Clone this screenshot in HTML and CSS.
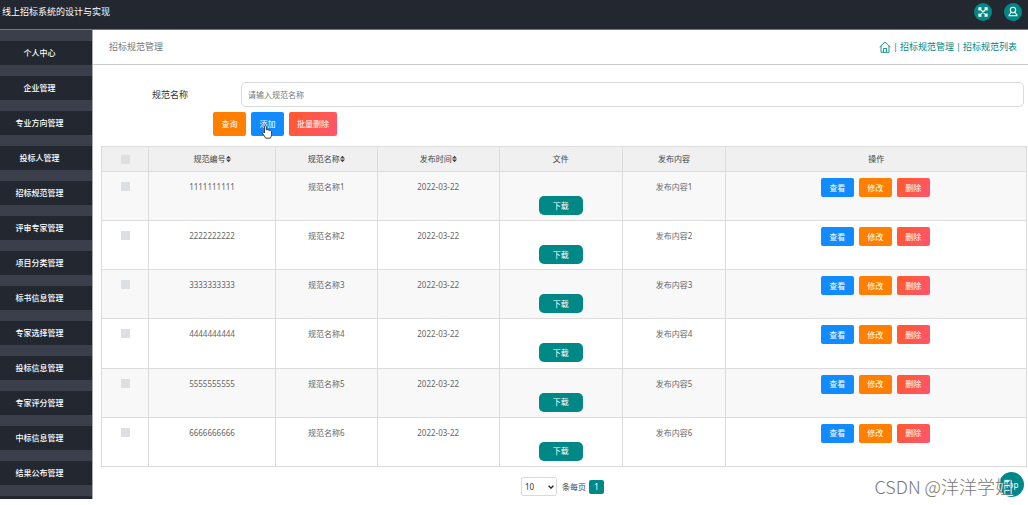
FILE: index.html
```html
<!DOCTYPE html>
<html lang="zh-CN">
<head>
<meta charset="utf-8">
<title>线上招标系统的设计与实现</title>
<link rel="stylesheet" href="styles.css">
</head>
<body>
<div class="app">
<header class="topbar">
  <h1 class="brand">线上招标系统的设计与实现</h1>
  <div class="top-actions">
    <button class="round" type="button" aria-label="全屏"><svg viewBox="0 0 18 18" fill="none" stroke="currentColor" stroke-width="1.300"><path d="M5.500 5.500l7 7M12.500 5.500l-7 7M5 7.500V5h2.500M10.500 5H13v2.500M13 10.500V13h-2.500M7.500 13H5v-2.500"/></svg></button>
    <button class="round" type="button" aria-label="用户"><svg viewBox="0 0 18 18" fill="none" stroke="currentColor" stroke-width="1.100"><circle cx="9" cy="7" r="2.700"/><path d="M7.500 9.300C7 10.300 5 10.300 5 12.800h8c0-2.500-2-2.500-2.500-3.500"/></svg></button>
  </div>
</header>
<div class="body">
<nav class="sidebar">
  <a href="#">个人中心</a><a href="#">企业管理</a><a href="#">专业方向管理</a><a href="#">投标人管理</a><a href="#">招标规范管理</a><a href="#">评审专家管理</a><a href="#">项目分类管理</a><a href="#">标书信息管理</a><a href="#">专家选择管理</a><a href="#">投标信息管理</a><a href="#">专家评分管理</a><a href="#">中标信息管理</a><a href="#">结果公布管理</a><a href="#" aria-label="更多"></a>
</nav>
<main class="main">
  <div class="page-head">
    <h2 class="page-title">招标规范管理</h2>
    <div class="crumbs">
      <a class="home" href="#" aria-label="首页"><svg viewBox="0 0 12 12" fill="none" stroke="currentColor" stroke-width=".9"><path d="M.7 6L6 1l5.300 5M2 5v6.300h8V5M4.500 11V7.500h3V11"/></svg></a>
      <span>|</span><a href="#">招标规范管理</a><span>|</span><a href="#">招标规范列表</a>
    </div>
  </div>
  <form class="search">
    <label for="name">规范名称</label>
    <input id="name" type="text" placeholder="请输入规范名称">
  </form>
  <div class="tools">
    <button class="btn tall orange" type="button">查询</button>
    <button class="btn tall blue has-pointer" type="button">添加<svg class="pointer" viewBox="0 0 12 14" fill="#fff" stroke="#333" stroke-width=".9"><path d="M3.500 8V1.600c0-1.300 1.800-1.300 1.800 0V5c.5-.7 1.600-.5 1.800.2.600-.5 1.500-.3 1.700.5.800-.4 1.700 0 1.700 1v3c0 1.500-.6 2.300-1 3.500H4.700C4 11.500 2.300 9.800 1.300 8.200.7 7.100 2 6.300 2.700 7.200z"/></svg></button>
    <button class="btn tall red" type="button">批量删除</button>
  </div>
  <table class="list">
    <colgroup><col class="c1"><col class="c2"><col class="c3"><col class="c4"><col class="c5"><col class="c6"><col class="c7"></colgroup>
    <thead><tr>
      <th><input type="checkbox" aria-label="全选"></th>
      <th>规范编号<svg class="sort" viewBox="0 0 5 8"><path d="M0 3.500L2.500.8 5 3.500zM0 4.500L2.500 7.200 5 4.500z"/></svg></th>
      <th>规范名称<svg class="sort" viewBox="0 0 5 8"><path d="M0 3.500L2.500.8 5 3.500zM0 4.500L2.500 7.200 5 4.500z"/></svg></th>
      <th>发布时间<svg class="sort" viewBox="0 0 5 8"><path d="M0 3.500L2.500.8 5 3.500zM0 4.500L2.500 7.200 5 4.500z"/></svg></th>
      <th>文件</th><th>发布内容</th><th>操作</th>
    </tr></thead>
    <tbody>
      <tr><td><input type="checkbox" aria-label="选择1"></td><td>1111111111</td><td>规范名称1</td><td>2022-03-22</td><td><button class="download" type="button">下载</button></td><td>发布内容1</td><td><div class="ops"><button class="btn blue" type="button">查看</button><button class="btn orange" type="button">修改</button><button class="btn red" type="button">删除</button></div></td></tr>
      <tr><td><input type="checkbox" aria-label="选择2"></td><td>2222222222</td><td>规范名称2</td><td>2022-03-22</td><td><button class="download" type="button">下载</button></td><td>发布内容2</td><td><div class="ops"><button class="btn blue" type="button">查看</button><button class="btn orange" type="button">修改</button><button class="btn red" type="button">删除</button></div></td></tr>
      <tr><td><input type="checkbox" aria-label="选择3"></td><td>3333333333</td><td>规范名称3</td><td>2022-03-22</td><td><button class="download" type="button">下载</button></td><td>发布内容3</td><td><div class="ops"><button class="btn blue" type="button">查看</button><button class="btn orange" type="button">修改</button><button class="btn red" type="button">删除</button></div></td></tr>
      <tr><td><input type="checkbox" aria-label="选择4"></td><td>4444444444</td><td>规范名称4</td><td>2022-03-22</td><td><button class="download" type="button">下载</button></td><td>发布内容4</td><td><div class="ops"><button class="btn blue" type="button">查看</button><button class="btn orange" type="button">修改</button><button class="btn red" type="button">删除</button></div></td></tr>
      <tr><td><input type="checkbox" aria-label="选择5"></td><td>5555555555</td><td>规范名称5</td><td>2022-03-22</td><td><button class="download" type="button">下载</button></td><td>发布内容5</td><td><div class="ops"><button class="btn blue" type="button">查看</button><button class="btn orange" type="button">修改</button><button class="btn red" type="button">删除</button></div></td></tr>
      <tr><td><input type="checkbox" aria-label="选择6"></td><td>6666666666</td><td>规范名称6</td><td>2022-03-22</td><td><button class="download" type="button">下载</button></td><td>发布内容6</td><td><div class="ops"><button class="btn blue" type="button">查看</button><button class="btn orange" type="button">修改</button><button class="btn red" type="button">删除</button></div></td></tr>
    </tbody>
  </table>
  <div class="pager">
    <span class="select-box">
      <select id="size"><option>10</option></select>
      <svg class="caret" viewBox="0 0 6 4" fill="none" stroke="#222" stroke-width="1.300"><path d="M.6.700L3 3.100 5.400.7"/></svg>
    </span>
    <label for="size">条每页</label>
    <button class="page" type="button">1</button>
  </div>
</main>
</div>
<button class="to-top" type="button">Top</button>
<div class="watermark">CSDN @洋洋学姐</div>
</div>
</body>
</html>
```

FILE: styles.css
```css
* { box-sizing: border-box; }
body {
  margin: 0;
  background: #fff;
  color: #666;
  font: 8px/12px "Noto Sans", "Noto Sans CJK SC", sans-serif;
}
button, input, select { font: inherit; margin: 0; }
button { border: 0; padding: 0; color: #fff; }
a { color: inherit; text-decoration: none; }
svg { display: block; }
.app {
  position: relative;
  display: flex;
  flex-direction: column;
  height: 100vh;
  overflow: hidden;
  padding-bottom: 6px;
}
.topbar {
  flex: none;
  display: flex;
  justify-content: space-between;
  align-items: center;
  height: 30px;
  padding: 0 6px 5px 2px;
  background: #23272f;
  border-bottom: 1px solid #777;
}
.brand { margin: 0; color: #fff; font-size: 9px; font-weight: 400; }
.top-actions { display: flex; gap: 12px; }
.round { width: 18px; height: 18px; border-radius: 50%; background: #008887; }
.body { flex: 1; display: flex; min-height: 0; }
.sidebar {
  flex: none;
  display: flex;
  flex-direction: column;
  gap: 11px;
  width: 93px;
  padding-top: 11px;
  overflow: hidden;
  background: #3a3f4b;
  border-right: 1px solid #aaa;
}
.sidebar a {
  flex: none;
  height: 24px;
  padding-right: 13px;
  line-height: 23px;
  text-align: center;
  color: #fff;
  font-weight: 500;
  background: #23272f;
}
.main { flex: 1; min-width: 0; }
.page-head {
  display: flex;
  justify-content: space-between;
  align-items: center;
  height: 35px;
  padding: 0 11px 0 16px;
  border-bottom: 1px solid #ccc;
  font-size: 9px;
}
.page-title { margin: 0; font-size: 9px; font-weight: 400; color: #777; }
.crumbs { display: flex; align-items: center; gap: 2px; color: #008887; }
.home svg { width: 12px; height: 12px; }
.search {
  display: flex;
  align-items: center;
  padding: 17px 4px 0 59px;
  font-size: 9px;
  color: #333;
}
.search label { width: 89px; }
.search input {
  flex: 1;
  height: 25px;
  padding: 0 6px;
  border: 1px solid #d8dade;
  border-radius: 5px;
  font-size: 8px;
}
.search input::placeholder { color: #777; }
.tools { display: flex; gap: 5px; padding: 5px 0 10px 120px; }
.btn { min-width: 33px; height: 19px; padding: 0 8px; border-radius: 2px; }
.tall { height: 24px; }
.orange { background: #ff8000; }
.blue { background: #128bff; }
.red { background: linear-gradient(120deg, #ff5a2c, #ff5570); }
.has-pointer { position: relative; }
.pointer { position: absolute; left: 10px; top: 13px; width: 12px; height: 14px; }
.list {
  width: calc(100% - 9px);
  height: 321px;
  margin-left: 8px;
  border-collapse: collapse;
  table-layout: fixed;
}
.c1 { width: 5.1%; }
.c2 { width: 13.7%; }
.c3 { width: 11%; }
.c4 { width: 13.2%; }
.c5 { width: 13.3%; }
.c6 { width: 11.2%; }
.list th, .list td { border: 1px solid #dcdcdc; padding: 0; text-align: center; }
.list th { height: 25px; background: #f0f0f0; color: #444; font-weight: 400; }
.list td { height: 49px; padding-top: 9px; vertical-align: top; }
.list tbody tr:nth-child(odd) { background: #f8f8f8; }
.list input {
  appearance: none;
  display: block;
  width: 9px;
  height: 9px;
  margin: 0 auto;
  background: #dce0e5;
}
.list td:first-child { padding-top: 10px; }
.sort { display: inline-block; width: 5px; height: 8px; vertical-align: -1px; fill: #444; }
.list .download {
  width: 44px;
  height: 19px;
  margin-top: 15px;
  border-radius: 5px;
  background: #008887;
}
.list td:last-child { padding-top: 6px; }
.ops { display: flex; justify-content: center; gap: 5px; padding-right: 2px; }
.pager {
  display: flex;
  justify-content: center;
  align-items: center;
  gap: 5px;
  padding: 10px 0 0 4px;
  color: #444;
}
.pager label { margin-right: -2px; }
.select-box { position: relative; }
.pager select {
  appearance: none;
  display: block;
  width: 36px;
  height: 19px;
  padding: 0 3px;
  border: 1px solid #d8dade;
  border-radius: 2px;
  background: #fff;
  color: #333;
}
.caret { position: absolute; right: 3px; top: 8px; width: 6px; height: 4px; pointer-events: none; }
.page { width: 15px; height: 14px; border-radius: 2px; background: #008887; }
.to-top {
  position: absolute;
  right: 4px;
  bottom: 8px;
  width: 25px;
  height: 25px;
  border-radius: 50%;
  background: #008887;
}
.watermark {
  position: absolute;
  right: 15px;
  bottom: 7px;
  font: 18px/24px "Noto Sans CJK SC", sans-serif;
  font-weight: 300;
  color: #777;
  text-shadow: 1px 1px 0 #fff;
}
```
